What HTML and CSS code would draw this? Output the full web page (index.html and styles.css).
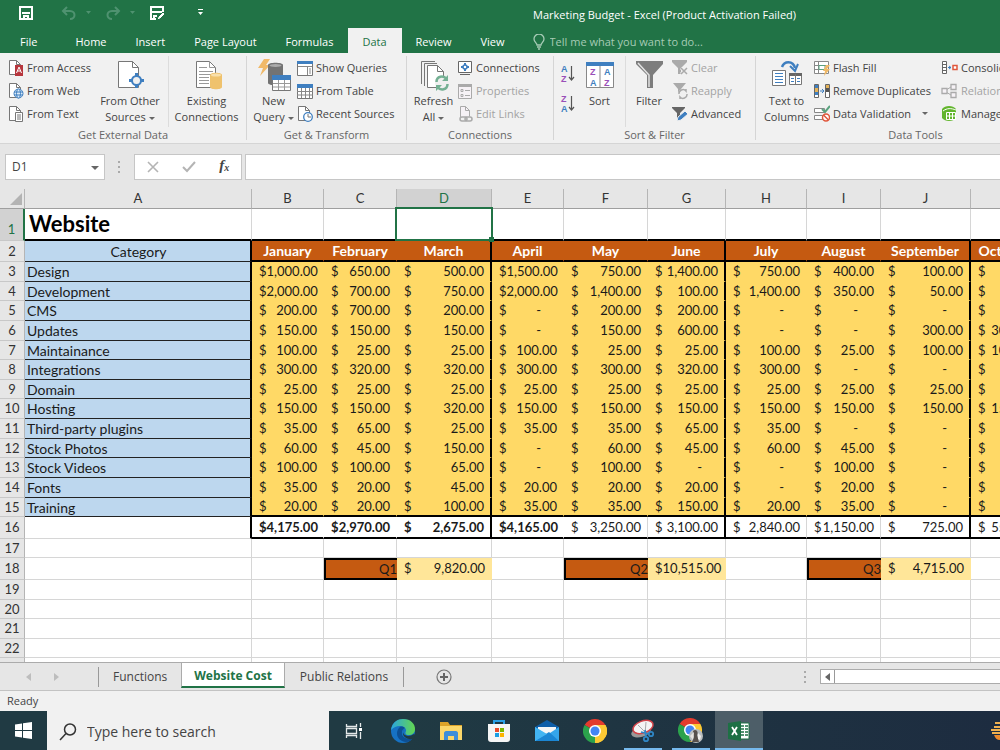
FILE: index.html
```html
<!DOCTYPE html>
<html lang="en">
<head>
    <meta charset="UTF-8">
    <meta name="viewport" content="width=device-width, initial-scale=1.0">
    <title>Marketing Budget - Excel</title>
    <link rel="stylesheet" href="styles.css">
</head>
<body>
<div class="app">
    <header class="titlebar">
        <div class="quick-access">
            <button class="qa-btn" aria-label="Save">
                <svg width="16" height="16" viewBox="0 0 16 16" fill="none" stroke="#fff" stroke-width="2"><path d="M2 2h12v12H2z"/><path d="M4 8h8" stroke-width="2"/><path d="M6 14v-3h4v3"/></svg>
            </button>
            <button class="qa-btn faded" aria-label="Undo">
                <svg width="16" height="16" viewBox="0 0 16 16" fill="none" stroke="#4f9270" stroke-width="2"><path d="M6 2L2 6l4 4M2 6h7c6 0 6 8 0 8"/></svg>
                <svg width="5" height="3" viewBox="0 0 5 3"><path d="M0 0h5L2.500 3z" fill="#4f9270"/></svg>
            </button>
            <button class="qa-btn faded" aria-label="Redo">
                <svg width="16" height="16" viewBox="0 0 16 16" fill="none" stroke="#4f9270" stroke-width="2"><path d="M10 2l4 4-4 4M14 6H7c-6 0-6 8 0 8"/></svg>
                <svg width="5" height="3" viewBox="0 0 5 3"><path d="M0 0h5L2.500 3z" fill="#4f9270"/></svg>
            </button>
            <button class="qa-btn" aria-label="Save As">
                <svg width="16" height="16" viewBox="0 0 16 16" fill="none" stroke="#fff" stroke-width="2"><path d="M14 7V2H2v12h5M3 7h10M5 14v-3h3"/><path d="M8 15l1-3 5-5 2 2-5 5z" fill="#fff" stroke="#217346" stroke-width="1"/></svg>
            </button>
            <button class="qa-btn" aria-label="Customize Quick Access Toolbar">
                <svg width="7" height="7" viewBox="0 0 7 7" fill="#fff"><path d="M1 0h5v1H1zM1 3h5L3.500 6z"/></svg>
            </button>
        </div>
        <div class="doc-title">Marketing Budget - Excel (Product Activation Failed)</div>
    </header>

    <nav class="ribbon-tabs">
        <button class="tab file">File</button>
        <button class="tab">Home</button>
        <button class="tab">Insert</button>
        <button class="tab">Page Layout</button>
        <button class="tab">Formulas</button>
        <button class="tab active">Data</button>
        <button class="tab">Review</button>
        <button class="tab">View</button>
        <label class="tell-me">
            <svg width="12" height="16" viewBox="0 0 12 16" fill="none" stroke="#a6cbb5" stroke-width="1.300"><path d="M4 11c0-2-3-3-3-6a5 5 0 0 1 10 0c0 3-3 4-3 6zM4 13h4M5 15h2"/></svg>
            <input type="text" placeholder="Tell me what you want to do..." aria-label="Tell me what you want to do">
        </label>
    </nav>

    <section class="ribbon">
        <div class="group get-external">
            <div class="group-body">
                <div class="stack">
                    <button class="small"><svg width="16" height="18" viewBox="0 0 16 18"><path d="M1.500 1.500h7l4 4v10h-11z" fill="#fff" stroke="#777"/><path d="M8.500 1.500v4h4" fill="none" stroke="#777"/><path d="M7 6h8v11H7z" fill="#b7363d"/><path d="M8.500 14L11 8l2.500 6M9.500 12h3" stroke="#fff" fill="none"/></svg>From Access</button>
                    <button class="small"><svg width="16" height="18" viewBox="0 0 16 18"><path d="M1.500 1.500h7l4 4v10h-11z" fill="#fff" stroke="#777"/><path d="M8.500 1.500v4h4" fill="none" stroke="#777"/><g fill="#dcebf8" stroke="#3f7fc0"><circle cx="10.500" cy="11.500" r="4.500"/><ellipse cx="10.500" cy="11.500" rx="2" ry="4.500"/><path d="M6 10h9M6 13h9"/></g></svg>From Web</button>
                    <button class="small"><svg width="16" height="18" viewBox="0 0 16 18"><path d="M1.500 1.500h7l4 4v10h-11z" fill="#fff" stroke="#777"/><path d="M8.500 1.500v4h4" fill="none" stroke="#777"/><path d="M7.500 7.500h7v9h-7z" fill="#fff" stroke="#777"/><path d="M9 10h4M9 12h4M9 14h4" stroke="#777"/></svg>From Text</button>
                </div>
                <button class="big w76"><svg width="32" height="32" viewBox="0 0 32 32"><path d="M4.500 2.500h14l6 6v20h-20z" fill="#fff" stroke="#777"/><path d="M18.500 2.500v6h6" fill="none" stroke="#777"/><circle cx="22.500" cy="21.500" r="4.500" fill="#f0f0f0" stroke="#3f7fc0" stroke-width="2"/><path d="M22.500 14v4M22.500 25v4M15 21.500h4M26 21.500h4" stroke="#3f7fc0" stroke-width="3"/></svg><span>From Other<br>Sources<i class="caret"></i></span></button>
                <button class="big w76 divided"><svg width="32" height="32" viewBox="0 0 32 32"><path d="M5.500 2.500h13l6 6v20h-19z" fill="#fff" stroke="#777"/><path d="M18.500 2.500v6h6M8 8.500h8M8 12.500h14M8 15.500h12M8 18.500h10M8 21.500h10M8 24.500h10" fill="none" stroke="#999"/><path d="M19 16c0-3 12-3 12 0v12c0 3-12 3-12 0z" fill="#efc26d"/><ellipse cx="25" cy="16" rx="5" ry="1.500" fill="#f8dfab"/></svg><span>Existing<br>Connections</span></button>
            </div>
            <div class="group-label">Get External Data</div>
        </div>

        <div class="group get-transform">
            <div class="group-body">
                <button class="big w46"><svg width="34" height="32" viewBox="0 0 34 32"><path d="M7 0h6L9 6h4L3 17l3-8H1z" fill="#f0b968"/><path d="M11 6c0-3 15-3 15 0v18c0 3-15 3-15 0z" fill="#737373"/><ellipse cx="18.500" cy="6.500" rx="6" ry="1.500" fill="#ababab"/><path d="M15.500 17.500h18v14h-18z" fill="#fff" stroke="#777"/><path d="M15 16h19v5H15z" fill="#3f7fc0"/><path d="M21.500 21v10M27.500 21v10M16 24.500h17M16 28h17" stroke="#999"/></svg><span>New<br>Query<i class="caret"></i></span></button>
                <div class="stack">
                    <button class="small"><svg width="16" height="16" viewBox="0 0 16 16"><path d="M.5 1.500h15v14H.5z" fill="#fff" stroke="#777"/><path d="M0 1h16v3H0z" fill="#3f7fc0"/><path d="M1 6.500h14M10.500 7v8M12 9h2M12 11h2M12 13h2" stroke="#888"/></svg>Show Queries</button>
                    <button class="small"><svg width="16" height="16" viewBox="0 0 16 16"><path d="M.5 1.500h15v14H.5z" fill="#fff" stroke="#777"/><path d="M0 1h16v4H0z" fill="#3f7fc0"/><path d="M4.500 5v10M8.500 5v10M12.500 5v10M0 8.500h16M0 12h16" stroke="#888"/></svg>From Table</button>
                    <button class="small"><svg width="16" height="18" viewBox="0 0 16 18"><path d="M1.500 1.500h7l4 4v10h-11z" fill="#fff" stroke="#777"/><path d="M8.500 1.500v4h4" fill="none" stroke="#777"/><circle cx="11" cy="12" r="4.300" fill="#fff" stroke="#3f7fc0" stroke-width="1.300"/><path d="M11 9v3h3" fill="none" stroke="#777"/></svg>Recent Sources</button>
                </div>
            </div>
            <div class="group-label">Get &amp; Transform</div>
        </div>

        <div class="group connections">
            <div class="group-body">
                <button class="big w46"><svg width="32" height="32" viewBox="0 0 32 32"><path d="M3.500 25V2.500H17M6.500 27V4.500H19" fill="none" stroke="#777"/><path d="M9.500 6.500h10l6 6v16h-16z" fill="#fff" stroke="#777"/><path d="M19.500 6.500v6h6" fill="none" stroke="#777"/><circle cx="24" cy="24" r="7" fill="#f0f0f0"/><path d="M18.500 23c0-6 7-7 10-3M29.500 25c0 6-7 7-10 3" fill="none" stroke="#74b093" stroke-width="2.500"/><path d="M30 16v6h-6zM18 32v-6h6z" fill="#74b093"/></svg><span>Refresh<br>All<i class="caret"></i></span></button>
                <div class="stack">
                    <button class="small"><svg width="16" height="16" viewBox="0 0 16 16"><path d="M1.500 1.500h13v11h-13zM3 14.500h10" fill="#fff" stroke="#666"/><path d="M8 3v8M4 7h8" stroke="#3f7fc0" stroke-width="2"/><circle cx="8" cy="7" r="2" fill="#fff" stroke="#3f7fc0" stroke-width="1.500"/></svg>Connections</button>
                    <button class="small" disabled><svg width="16" height="16" viewBox="0 0 16 16"><path d="M1.500 1.500h13v14h-13z" fill="#f6f2f6" stroke="#aaa"/><path d="M1 1h14v3H1z" fill="#aaa"/><path d="M4 6.500h2v2H4zM4 11.500h2v2H4zM8 7.500h5M8 12.500h5" stroke="#aaa" fill="none"/></svg>Properties</button>
                    <button class="small" disabled><svg width="16" height="18" viewBox="0 0 16 18"><path d="M3.500 12V1.500h5l4 4v6" fill="#f6f2f6" stroke="#aaa"/><path d="M8.500 1.500v4h4" fill="none" stroke="#aaa"/><rect x="3" y="12" width="7" height="4" rx="2" fill="none" stroke="#aaa" stroke-width="1.500"/><rect x="8" y="12" width="7" height="4" rx="2" fill="none" stroke="#aaa" stroke-width="1.500"/></svg>Edit Links</button>
                </div>
            </div>
            <div class="group-label">Connections</div>
        </div>

        <div class="group sort-filter">
            <div class="group-body">
                <div class="az-stack">
                    <button class="az" aria-label="Sort A to Z"><svg width="16" height="22" viewBox="0 0 16 22"><text x="1" y="9" class="az-text blue">A</text><text x="1" y="19" class="az-text violet">Z</text><path d="M11.500 3v14M9 14l2.500 3 2.500-3" fill="none" stroke="#555" stroke-width="1.200"/></svg></button>
                    <button class="az" aria-label="Sort Z to A"><svg width="16" height="22" viewBox="0 0 16 22"><text x="1" y="9" class="az-text violet">Z</text><text x="1" y="19" class="az-text blue">A</text><path d="M11.500 3v14M9 14l2.500 3 2.500-3" fill="none" stroke="#555" stroke-width="1.200"/></svg></button>
                </div>
                <button class="big w46"><svg width="32" height="32" viewBox="0 0 32 32"><path d="M2.500 5.500h27v23h-27z" fill="#fff" stroke="#888"/><path d="M2 3h28v4H2z" fill="#3f7fc0"/><path d="M16 7v21" stroke="#888"/><g class="az-text"><text x="6" y="16" class="violet">Z</text><text x="6" y="27" class="blue">A</text><text x="20" y="16" class="blue">A</text><text x="20" y="27" class="violet">Z</text></g></svg><span>Sort</span></button>
                <button class="big w46 divided"><svg width="32" height="32" viewBox="0 0 32 32"><path d="M3 2h27v3L20 16v13h-6V16L3 5z" fill="#7d7d7d"/><path d="M5 4l11 12v12" fill="none" stroke="#e2e2e2" stroke-width="1.500"/></svg><span>Filter</span></button>
                <div class="stack">
                    <button class="small" disabled><svg width="16" height="18" viewBox="0 0 16 18"><path d="M0 1h15v2L9 9v6H6V9L0 3z" fill="#aaa"/><path d="M9 9l6 6M15 9l-6 6" stroke="#f1f1f1" stroke-width="3"/><path d="M9 9l6 6M15 9l-6 6" stroke="#aaa" stroke-width="1.500"/></svg>Clear</button>
                    <button class="small" disabled><svg width="16" height="18" viewBox="0 0 16 18"><path d="M1 1h13L9 7v7L6 12V7z" fill="#aaa"/><circle cx="11" cy="12" r="5" fill="#f0f0f0"/><path d="M7 12a4 4 0 0 1 7-3v-2M15 12a4 4 0 0 1-7 3v2" fill="none" stroke="#aaa" stroke-width="1.500"/></svg>Reapply</button>
                    <button class="small"><svg width="16" height="18" viewBox="0 0 16 18"><path d="M0 2h13v1L8 8v6H5V8L0 3z" fill="#666"/><path d="M5 16l1-4 7-6 3 3-7 6z" fill="#3f7fc0" stroke="#f0f0f0"/></svg>Advanced</button>
                </div>
            </div>
            <div class="group-label">Sort &amp; Filter</div>
        </div>

        <div class="group data-tools">
            <div class="group-body">
                <button class="big w54"><svg width="32" height="32" viewBox="0 0 32 32"><path d="M1.500 11.500h13v15h-13z" fill="#fff" stroke="#777"/><path d="M4 14.500h8M4 17.500h8M4 20.500h8M4 23.500h8" stroke="#3f7fc0"/><path d="M18.500 14.500h12v11h-12z" fill="#fff" stroke="#777"/><path d="M18 14h13v3H18z" fill="#666"/><path d="M24.500 15v10" stroke="#777"/><path d="M20 19.500h3M20 22.500h3M26 19.500h3M26 22.500h3" stroke="#3f7fc0"/><path d="M11 8c2-6 11-7 13 1" fill="none" stroke="#3f7fc0" stroke-width="2.500"/><path d="M19 7l5 5 3-7" fill="none" stroke="#3f7fc0" stroke-width="2"/></svg><span>Text to<br>Columns</span></button>
                <div class="stack tools-left">
                    <button class="small"><svg width="16" height="16" viewBox="0 0 16 16"><path d="M.5 1.500h14v12H.5zM.5 5.500h14M.5 9.500h14M4.500 1v12" fill="#fff" stroke="#888"/><path d="M5 5.500h6v4H5z" fill="#fff" stroke="#5aa37f"/><path d="M12 5h4l-3 4h3l-6 7 1-5H9z" fill="#f0b968"/></svg>Flash Fill</button>
                    <button class="small"><svg width="16" height="16" viewBox="0 0 16 16"><path d="M.5 1.500h4v13h-4zM11.500 1.500h4v13h-4z" fill="#fff" stroke="#666"/><path d="M1 2h3v3H1zM1 9h3v3H1z" fill="#3f7fc0"/><path d="M1 5h3v4H1zM12 2h3v3h-3z" fill="#e5b359"/><path d="M12 5h3v4h-3z" fill="#555"/><path d="M6 8h4M8 6l2 2-2 2" fill="none" stroke="#3f7fc0"/></svg>Remove Duplicates</button>
                    <button class="small"><svg width="16" height="17" viewBox="0 0 16 17"><path d="M.5 3.500h10v4H.5zM.5 10.500h10v4H.5z" fill="#fff" stroke="#888"/><path d="M8 4l3 3 5-6" fill="none" stroke="#5aa37f" stroke-width="2"/><circle cx="12" cy="12.500" r="3.500" fill="#fff" stroke="#e0573c" stroke-width="1.500"/><path d="M9.500 10l5 5" stroke="#e0573c" stroke-width="1.500"/></svg>Data Validation<i class="caret wide"></i></button>
                </div>
                <div class="stack">
                    <button class="small"><svg width="17" height="16" viewBox="0 0 17 16"><path d="M1.500 1.500h4v12h-4zM1 4.500h5M1 7.500h5M1 10.500h5" fill="#fff" stroke="#666"/><path d="M7 7.500h3M8 6l2 1.500L8 9" fill="none" stroke="#3f7fc0"/><path d="M12 5.500h4v4h-4z" fill="#fff" stroke="#e0573c" stroke-width="1.500"/></svg>Consolidate</button>
                    <button class="small" disabled><svg width="17" height="16" viewBox="0 0 17 16"><path d="M5 7l5-3M5 9l5 3" stroke="#aaa"/><path d="M1 5.500h5v5H1zM10 1.500h5v5h-5zM10 9.500h5v5h-5z" fill="#f6f2f6" stroke="#aaa" stroke-width="1.300"/></svg>Relationships</button>
                    <button class="small"><svg width="17" height="17" viewBox="0 0 17 17"><path d="M1 4c3-4 11-4 14 0v9c-3 4-11 4-14 0z" fill="#62b52d"/><path d="M5.500 7.500h9v7h-9zM8.500 7v8M11.500 7v8M5 11h10" fill="none" stroke="#fff"/><path d="M2 6c4-3 8-3 13-1" stroke="#fff" fill="none"/></svg>Manage Data Model</button>
                </div>
            </div>
            <div class="group-label">Data Tools</div>
        </div>
    </section>

    <div class="formula-bar">
        <div class="name-box">
            <input type="text" value="D1" aria-label="Name Box">
            <button aria-label="Name list"><i class="caret"></i></button>
        </div>
        <span class="grip"></span>
        <div class="fx-box">
            <button aria-label="Cancel"><svg width="12" height="12" viewBox="0 0 12 12"><path d="M1 1l10 10M11 1L1 11" stroke="#b4b4b4" stroke-width="1.600"/></svg></button>
            <button aria-label="Enter"><svg width="14" height="12" viewBox="0 0 14 12"><path d="M1 6l4 4 8-9" fill="none" stroke="#b4b4b4" stroke-width="2"/></svg></button>
            <button class="fx" aria-label="Insert Function">f<sub>x</sub></button>
        </div>
        <input class="formula" type="text" aria-label="Formula">
    </div>

    <main class="sheet">
        <table id="grid">
            <colgroup>
                <col class="c-head"><col class="c-a"><col class="c-b"><col class="c-c"><col class="c-d"><col class="c-e"><col class="c-f"><col class="c-g"><col class="c-h"><col class="c-i"><col class="c-j"><col class="c-k">
            </colgroup>
            <thead>
                <tr>
                    <th class="corner"><svg width="12" height="12" viewBox="0 0 12 12"><path d="M12 0v12H0z" fill="#b3b3b3"/></svg></th>
                    <th>A</th><th>B</th><th>C</th><th class="selected">D</th><th>E</th><th>F</th><th>G</th><th>H</th><th>I</th><th>J</th><th></th>
                </tr>
            </thead>
            <tbody></tbody>
        </table>
    </main>

    <footer class="sheet-tabs">
        <div class="tab-arrows">
            <button aria-label="Previous sheet"><svg width="5" height="8" viewBox="0 0 5 8"><path d="M5 0v8L0 4z" fill="#bdbdbd"/></svg></button>
            <button aria-label="Next sheet"><svg width="5" height="8" viewBox="0 0 5 8"><path d="M0 0v8l5-4z" fill="#bdbdbd"/></svg></button>
        </div>
        <button class="sheet-tab first">Functions</button>
        <button class="sheet-tab current">Website Cost</button>
        <button class="sheet-tab last">Public Relations</button>
        <button class="add-sheet" aria-label="New sheet"><svg width="16" height="16" viewBox="0 0 16 16"><circle cx="8" cy="8" r="7" fill="none" stroke="#777" stroke-width="1.200"/><path d="M8 4v8M4 8h8" stroke="#666" stroke-width="2"/></svg></button>
        <span class="grip"></span>
        <div class="scrollbar">
            <button aria-label="Scroll left"><svg width="5" height="8" viewBox="0 0 5 8"><path d="M5 0v8L0 4z" fill="#666"/></svg></button>
        </div>
    </footer>
    <div class="status">Ready</div>

    <div class="taskbar">
        <button class="start" aria-label="Start"><svg width="17" height="17" viewBox="0 0 17 17" fill="#fff"><path d="M0 2.500l7-1V8H0zM8 1.300L17 0v8H8zM0 9h7v6.500l-7-1zM8 9h9v8l-9-1.300z"/></svg></button>
        <label class="search">
            <svg width="18" height="18" viewBox="0 0 18 18" fill="none" stroke="#333" stroke-width="1.500"><circle cx="11" cy="6.500" r="5.500"/><path d="M7 10.500L1 17"/></svg>
            <input type="text" placeholder="Type here to search" aria-label="Search">
        </label>
        <button class="task view" aria-label="Task View"><svg width="18" height="16" viewBox="0 0 18 16" fill="none" stroke="#e4e8e9" stroke-width="1.300"><path d="M1.500 1v2.500h10V1M1.500 15v-2.500h10V15M1.500 5.500h10v5h-10zM15.500 0v4M15.500 9v7"/><path d="M14 5h3v3h-3z" fill="#fff" stroke="none"/></svg></button>
        <button class="task" aria-label="Edge"><svg width="24" height="24" viewBox="0 0 24 24">
            <defs><linearGradient id="edgeTop" x1="0" x2="1"><stop offset="0" stop-color="#2aa6e0"/><stop offset="1" stop-color="#63d64f"/></linearGradient></defs>
            <circle cx="12" cy="12" r="12" fill="#1672c4"/><path d="M0 11C1 3 7 0 12 0c8 0 12 5 12 10 0 4-3 6-6 6-4 0-4-2-3-4 1-5-9-8-15-1z" fill="url(#edgeTop)"/><path d="M9 8c-5 4-4 14 6 15 3 0 6-2 7-4-5 2-12 0-11-6 0-2 1-3 3-4-1-1-3-2-5-1z" fill="#0d4f93"/><path d="M13 10c-2 3-1 6 4 7 2 0 4-1 6-2l1 1c0 2-1 3-2 4-5 1-11-2-10-7 0-1 0-2 1-3z" fill="#203a43"/></svg></button>
        <button class="task" aria-label="File Explorer"><svg width="22" height="20" viewBox="0 0 22 20"><path d="M0 1h8l2 3h12v15H0z" fill="#dca329"/><path d="M0 5h22v14H0z" fill="#fbd76a"/><path d="M4 19v-7c0-1 1-2 2-2h10c1 0 2 1 2 2v7h-4v-4H8v4z" fill="#3d8ed8"/></svg></button>
        <button class="task" aria-label="Microsoft Store"><svg width="24" height="24" viewBox="0 0 24 24"><path d="M7 6V2h10v4" fill="none" stroke="#2aa0e6" stroke-width="2"/><path d="M1 5h22v15c0 2-1 3-3 3H4c-2 0-3-1-3-3z" fill="#f5f5f5"/><path d="M8 9h4v4H8z" fill="#ea4b2b"/><path d="M13 9h4v4h-4z" fill="#7ab800"/><path d="M8 14h4v4H8z" fill="#1b9de2"/><path d="M13 14h4v4h-4z" fill="#fbb400"/></svg></button>
        <button class="task" aria-label="Mail"><svg width="24" height="24" viewBox="0 0 24 24"><path d="M0 8l12-7 12 7v6H0z" fill="#0f5ea8"/><path d="M3 8h18v8H3z" fill="#f5f5f5"/><path d="M0 8l12 8 12-8v14H0z" fill="#35a5ea"/><path d="M0 22l14-9 10 9z" fill="#1b86d4"/><path d="M0 8l12 7L0 22z" fill="#42b4f2"/></svg></button>
        <button class="task" aria-label="Chrome"><svg width="24" height="24" viewBox="0 0 24 24"><path d="M12 12L1.600 6A12 12 0 0 1 22.400 6z" fill="#e33b2e"/><path d="M12 12l10.400-6A12 12 0 0 1 12 24z" fill="#fcc934"/><path d="M12 12v12A12 12 0 0 1 1.600 6z" fill="#2ba24c"/><path d="M12 6h10.400A12 12 0 0 1 12 24l5.200-9z" fill="#fcc934"/><circle cx="12" cy="12" r="6" fill="#fff"/><circle cx="12" cy="12" r="4.500" fill="#4285f4"/></svg></button>
        <button class="task open" aria-label="Snipping Tool"><svg width="24" height="24" viewBox="0 0 24 24"><ellipse cx="10" cy="13" rx="10" ry="5" fill="#999" transform="rotate(-15 10 13)"/><ellipse cx="12" cy="8" rx="10.500" ry="6" fill="#f4f4f4" stroke="#d2444a" stroke-width="1.500" transform="rotate(-20 12 8)"/><path d="M7 6l9 9M15 3l-1 12" stroke="#aaa"/><g fill="none" stroke="#2f86c5" stroke-width="1.800"><circle cx="20" cy="15" r="2.200"/><circle cx="15" cy="20" r="2.200"/><path d="M10 13l8 2M14 11l1 7"/></g></svg></button>
        <button class="task open" aria-label="Chrome profile"><svg width="26" height="26" viewBox="0 0 26 26"><path d="M12 12L1.600 6A12 12 0 0 1 22.400 6z" fill="#e33b2e"/><path d="M12 12v12A12 12 0 0 1 1.600 6z" fill="#2ba24c"/><path d="M12 6h10.400A12 12 0 0 1 12 24l5.200-9z" fill="#fcc934"/><circle cx="12" cy="12" r="6" fill="#fff"/><circle cx="12" cy="12" r="4.500" fill="#4285f4"/><circle cx="18" cy="18" r="7" fill="#b9bec0"/><path d="M15 13c3-3 6 1 4 4l2 7h-7l2-5z" fill="#58514c"/><path d="M20 15l3 3-1 4-2-1z" fill="#f1efec"/><path d="M12 18l4-4-1 8z" fill="#e8e4df"/></svg></button>
        <button class="task open active" aria-label="Excel"><svg width="22" height="20" viewBox="0 0 22 20"><path d="M11 2h10v16H11z" fill="#fff" stroke="#1d7044"/><path d="M13 5h3M17 5h3M13 8h3M17 8h3M13 11h3M17 11h3M13 14h3M17 14h3" stroke="#1d7044" stroke-width="1.300"/><path d="M0 2l13-2v20L0 18z" fill="#1d7044"/><path d="M4 6l5 8M9 6l-5 8" stroke="#fff" stroke-width="1.800"/></svg></button>
        <span class="tray"><svg width="9" height="20" viewBox="0 0 9 20"><path d="M4 2h5M3 6h6M0 9h9M1 12h8" stroke="#f0b04f" stroke-width="2"/><path d="M3 14h6v5c-3 0-5-2-6-5z" fill="#ee8a2c"/></svg></span>
    </div>
</div>

<script>
    const months = ['January', 'February', 'March', 'April', 'May', 'June', 'July', 'August', 'September', 'October'];
    const costs = [
        ['Design', '1,000.00', '650.00', '500.00', '1,500.00', '750.00', '1,400.00', '750.00', '400.00', '100.00', '-'],
        ['Development', '2,000.00', '700.00', '750.00', '2,000.00', '1,400.00', '100.00', '1,400.00', '350.00', '50.00', '-'],
        ['CMS', '200.00', '700.00', '200.00', '-', '200.00', '200.00', '-', '-', '-', '-'],
        ['Updates', '150.00', '150.00', '150.00', '-', '150.00', '600.00', '-', '-', '300.00', '300.00'],
        ['Maintainance', '100.00', '25.00', '25.00', '100.00', '25.00', '25.00', '100.00', '25.00', '100.00', '100.00'],
        ['Integrations', '300.00', '320.00', '320.00', '300.00', '300.00', '320.00', '300.00', '-', '-', '-'],
        ['Domain', '25.00', '25.00', '25.00', '25.00', '25.00', '25.00', '25.00', '25.00', '25.00', '-'],
        ['Hosting', '150.00', '150.00', '320.00', '150.00', '150.00', '150.00', '150.00', '150.00', '150.00', '150.00'],
        ['Third-party plugins', '35.00', '65.00', '25.00', '35.00', '35.00', '65.00', '35.00', '-', '-', '-'],
        ['Stock Photos', '60.00', '45.00', '150.00', '-', '60.00', '45.00', '60.00', '45.00', '-', '-'],
        ['Stock Videos', '100.00', '100.00', '65.00', '-', '100.00', '-', '-', '100.00', '-', '-'],
        ['Fonts', '35.00', '20.00', '45.00', '20.00', '20.00', '20.00', '-', '20.00', '-', '-'],
        ['Training', '20.00', '20.00', '100.00', '35.00', '35.00', '150.00', '20.00', '35.00', '-', '-']
    ];
    const totals = ['4,175.00', '2,970.00', '2,675.00', '4,165.00', '3,250.00', '3,100.00', '2,840.00', '1,150.00', '725.00', '550.00'];
    const quarters = { 1: 'Q1', 2: '9,820.00', 4: 'Q2', 5: '10,515.00', 7: 'Q3', 8: '4,715.00' };

    const body = document.querySelector('#grid tbody');

    function money(value) {
        const cls = value === '-' ? 'amount nil' : 'amount';
        return '<div class="money"><span>$</span><span class="' + cls + '">' + value + '</span></div>';
    }

    // last month of a quarter gets the heavy right edge
    function edge(i) {
        return i % 3 === 2 ? ' edge' : '';
    }

    function addRow(number, cls, cells) {
        body.insertAdjacentHTML('beforeend', '<tr class="' + cls + '"><th>' + number + '</th>' + cells + '</tr>');
    }

    function cellsFor(fn) {
        return months.map((m, i) => fn(i)).join('');
    }

    addRow(1, 'row-title', '<td>Website</td>' + cellsFor(i => i === 2 ? '<td class="active-cell"></td>' : '<td></td>'));
    addRow(2, 'row-months', '<td class="category">Category</td>' + cellsFor(i => '<td class="month' + edge(i) + '">' + months[i] + '</td>'));
    costs.forEach((row, n) => {
        addRow(n + 3, 'row-cost', '<td class="category">' + row[0] + '</td>' + cellsFor(i => '<td class="cost' + edge(i) + '">' + money(row[i + 1]) + '</td>'));
    });
    addRow(16, 'row-total', '<td></td>' + cellsFor(i => '<td class="total' + (i < 4 ? ' bold' : '') + edge(i) + '">' + money(totals[i]) + '</td>'));
    addRow(17, 'row-blank', '<td></td>' + cellsFor(i => '<td></td>'));
    addRow(18, 'row-quarter', '<td></td>' + cellsFor(i => {
        if (!quarters[i]) return '<td></td>';
        if (i % 3 === 1) return '<td class="q-name">' + quarters[i] + '</td>';
        return '<td class="q-sum">' + money(quarters[i]) + '</td>';
    }));
    for (let n = 19; n <= 22; n++) {
        addRow(n, 'row-blank', '<td></td>' + cellsFor(i => '<td></td>'));
    }
    addRow('', 'row-blank', '<td></td>' + cellsFor(i => '<td></td>'));
</script>
</body>
</html>
```
FILE: styles.css
```css
* {
    box-sizing: border-box;
}
body {
    margin: 0;
    font-family: "Open Sans", "Noto Sans", sans-serif;
    font-size: 11px;
    color: #444;
    background-color: #e6e6e6;
}
button,
input {
    font: inherit;
    color: inherit;
    background: none;
    border: none;
    padding: 0;
    margin: 0;
    outline: none;
}
button {
    cursor: pointer;
    white-space: nowrap;
}
svg {
    display: block;
    flex: none;
}
.app {
    display: flex;
    flex-direction: column;
    height: 100vh;
    overflow: hidden;
}

/* title bar */
.titlebar {
    display: flex;
    align-items: center;
    height: 28px;
    flex: none;
    background-color: #217346;
    color: #fff;
}
.quick-access {
    display: flex;
    align-items: center;
    gap: 14px;
    width: 533px;
    padding-left: 18px;
    padding-bottom: 3px;
}
.qa-btn {
    display: flex;
    align-items: center;
    gap: 9px;
}
.qa-btn:first-child {
    margin-right: 13px;
}
.qa-btn:last-child {
    margin-left: 18px;
}
.doc-title {
    white-space: nowrap;
}

/* ribbon tabs */
.ribbon-tabs {
    display: flex;
    height: 25px;
    flex: none;
    background-color: #217346;
    color: #fff;
}
.tab {
    padding: 2px 15px 0 14px;
}
.tab.file {
    padding: 2px 24px 0 20px;
}
.tab.active {
    background-color: #f1f1f1;
    color: #217346;
}
.tell-me {
    display: flex;
    align-items: center;
    gap: 5px;
    margin-left: 13px;
    padding-top: 2px;
    flex: 1;
}
.tell-me input {
    flex: 1;
}
.tell-me input::placeholder {
    color: #a6cbb5;
    opacity: 1;
}

/* ribbon */
.ribbon {
    display: flex;
    height: 91px;
    flex: none;
    padding-top: 3px;
    background-color: #f1f1f1;
    border-bottom: 1px solid #d5d5d5;
    overflow: hidden;
}
.group {
    flex: none;
    border-right: 1px solid #d5d5d5;
    margin-bottom: 3px;
}
.get-external {
    width: 247px;
}
.get-transform {
    width: 160px;
}
.connections {
    width: 147px;
}
.sort-filter {
    width: 202px;
}
.data-tools {
    width: 320px;
}
.group-body {
    display: flex;
    height: 71px;
    padding-left: 3px;
}
.get-external .group-body {
    padding-left: 8px;
}
.group-label {
    height: 16px;
    line-height: 16px;
    text-align: center;
    color: #666;
}
.stack {
    display: flex;
    flex-direction: column;
    flex: none;
}
.get-external .stack {
    width: 84px;
}
.tools-left {
    width: 127px;
}
.small {
    display: flex;
    align-items: center;
    gap: 3px;
    height: 23px;
}
.small[disabled] {
    color: #a3a3a3;
}
.big {
    display: flex;
    flex-direction: column;
    align-items: center;
    flex: none;
    line-height: 16px;
    padding-top: 3px;
    gap: 2px;
}
.big.w76 {
    width: 76px;
}
.big.w54 {
    width: 55px;
}
.big.w46 {
    width: 47px;
}
.divided {
    border-left: 1px solid #dcdcdc;
}
.caret {
    display: inline-block;
    border: 3px solid transparent;
    border-top-color: #666;
    border-bottom-width: 0;
    margin-left: 3px;
    vertical-align: middle;
}
.caret.wide {
    margin-left: 8px;
}
.az-stack {
    display: flex;
    flex-direction: column;
    gap: 8px;
    width: 19px;
    padding: 7px 0 0 3px;
}
.sort-filter .divided {
    margin-left: 2px;
}
.az-text {
    font-family: "Liberation Sans", sans-serif;
    font-size: 9px;
    font-weight: 700;
}
.blue {
    fill: #3f7fc0;
}
.violet {
    fill: #9a4fb8;
}

/* formula bar */
.formula-bar {
    display: flex;
    align-items: center;
    height: 45px;
    flex: none;
    padding-left: 5px;
    background-color: #e6e6e6;
    font-size: 12px;
}
.name-box,
.fx-box,
.formula {
    display: flex;
    align-items: center;
    height: 26px;
    background-color: #fff;
    border: 1px solid #c6c6c6;
}
.name-box {
    width: 100px;
    padding: 0 5px 0 6px;
}
.name-box input {
    flex: 1;
    min-width: 0;
}
.name-box .caret {
    border-width: 4px 4px 0;
}
.grip {
    width: 2px;
    height: 12px;
    flex: none;
    background-image: linear-gradient(#aaa 2px, transparent 2px);
    background-size: 2px 5px;
}
.formula-bar .grip {
    margin: 0 14px 0 13px;
}
.fx-box {
    width: 108px;
    justify-content: space-around;
}
.fx {
    font-family: "Liberation Serif", serif;
    font-style: italic;
    font-weight: 700;
    font-size: 15px;
    line-height: 15px;
}
.fx sub {
    font-size: 10px;
    vertical-align: -1px;
}
.formula {
    flex: 1;
    margin-left: 3px;
    border-right: none;
}

/* worksheet */
.sheet {
    flex: 1;
    min-height: 0;
    overflow: hidden;
    background-color: #fff;
    font-family: Lato, "Open Sans", sans-serif;
    font-size: 13px;
    color: #1a1a1a;
}
table {
    table-layout: fixed;
    width: 1039px;
    border-collapse: separate;
    border-spacing: 0;
}
.c-head { width: 25px; }
.c-a { width: 227px; }
.c-b { width: 72px; }
.c-c { width: 73px; }
.c-d { width: 95px; }
.c-e { width: 72px; }
.c-f { width: 84px; }
.c-g { width: 78px; }
.c-h { width: 81px; }
.c-i { width: 74px; }
.c-j { width: 90px; }
.c-k { width: 68px; }
th,
td {
    padding: 0;
    line-height: 17px;
    white-space: nowrap;
    border-right: 1px solid #d6d6d6;
    border-bottom: 1px solid #d6d6d6;
}
th {
    font-weight: 400;
    color: #333;
    background-color: #e6e6e6;
    border-color: #b5b5b5;
}
thead tr {
    height: 20px;
}
thead th {
    border-bottom-color: #9f9f9f;
}
thead .selected {
    background-color: #d2d2d2;
    color: #217346;
}
.corner svg {
    margin-left: 10px;
}
tbody tr {
    height: 20px;
}
tbody th {
    border-bottom-color: #c8c8c8;
}
.row-title {
    height: 32px;
}
.row-title th {
    background-color: #d2d2d2;
    color: #217346;
    border-right: 2px solid #217346;
    vertical-align: bottom;
    padding-bottom: 2px;
}
.row-title td {
    border-bottom: 2px solid #000;
}
.row-title td:nth-child(2) {
    padding-left: 4px;
    font-size: 22px;
    font-weight: 700;
    line-height: 28px;
    color: #000;
}
.active-cell {
    position: relative;
}
.active-cell::before {
    content: "";
    position: absolute;
    inset: -2px;
    border: 2px solid #217346;
}
.active-cell::after {
    content: "";
    position: absolute;
    right: -3px;
    bottom: -3px;
    width: 5px;
    height: 5px;
    background-color: #217346;
}
.row-months {
    height: 21px;
}
.category {
    padding-left: 2px;
    font-size: 14px;
    background-color: #bdd7ee;
    border-right: 2px solid #000;
    border-bottom: 1px solid #222;
}
.row-months .category {
    text-align: center;
}
.month {
    background-color: #c55a11;
    border-right-color: #c55a11;
    border-bottom: 2px solid #000;
    color: #fff;
    font-size: 14px;
    font-weight: 700;
    text-align: center;
}
.cost {
    background-color: #ffd966;
    border-color: #ffd966;
}
.row-cost:nth-child(4),
.row-cost:nth-child(7),
.row-cost:nth-child(9),
.row-cost:nth-child(12),
.row-cost:nth-child(15),
.row-blank:nth-child(17),
.row-blank:nth-child(20),
.row-blank:nth-child(22) {
    height: 19px;
}
.row-cost:nth-child(15) .cost {
    border-bottom: 2px solid #000;
}
.row-total {
    height: 22px;
}
.row-total td:nth-child(2) {
    border-right: 2px solid #000;
}
.total {
    border-bottom: 2px solid #000;
}
.bold {
    font-weight: 700;
    border-right-color: #fff;
}
.edge {
    border-right: 2px solid #000;
}
.money {
    display: flex;
    justify-content: space-between;
    padding: 0 6px 0 7px;
}
.nil {
    padding-right: 16px;
}
.row-quarter {
    height: 22px;
}
.q-name {
    background-color: #c55a11;
    border: 2px solid #000;
    border-right: none;
    text-align: right;
}
.q-sum {
    background-color: #ffe699;
    border-color: #ffe699;
}

/* sheet tabs */
.sheet-tabs {
    display: flex;
    align-items: center;
    height: 29px;
    flex: none;
    background-color: #e6e6e6;
    border-top: 1px solid #ababab;
    border-bottom: 1px solid #c3c3c3;
    font-size: 12px;
}
.tab-arrows {
    display: flex;
    gap: 23px;
    width: 98px;
    padding-left: 26px;
}
.sheet-tab {
    height: 20px;
    padding: 0 14px;
}
.sheet-tab.first {
    border-left: 1px solid #999;
}
.sheet-tab.last {
    padding: 0 15px;
    border-right: 1px solid #999;
}
.sheet-tab.current {
    align-self: flex-start;
    height: 25px;
    padding: 2px 12px 0;
    background-color: #fff;
    border: 1px solid #ababab;
    border-top: none;
    border-bottom: 2px solid #217346;
    color: #217346;
    font-weight: 700;
}
.add-sheet {
    margin-left: 32px;
}
.sheet-tabs .grip {
    margin-left: auto;
}
.scrollbar {
    display: flex;
    width: 180px;
    height: 15px;
    margin-left: 14px;
    background-color: #fff;
    border: 1px solid #ababab;
    border-right: none;
}
.scrollbar button {
    display: flex;
    align-items: center;
    justify-content: center;
    width: 14px;
    border-right: 1px solid #999;
}
.status {
    height: 20px;
    line-height: 20px;
    flex: none;
    padding-left: 7px;
    background-color: #f1f1f1;
}

/* taskbar */
.taskbar {
    display: flex;
    height: 39px;
    flex: none;
    background: linear-gradient(90deg, #203a43 40%, #1d2c40);
}
.start {
    display: flex;
    align-items: center;
    justify-content: center;
    width: 47px;
}
.search {
    display: flex;
    align-items: center;
    gap: 10px;
    width: 282px;
    padding-left: 12px;
    padding-top: 2px;
    background-color: #f1f1f1;
    font-size: 14px;
}
.search input {
    flex: 1;
    min-width: 0;
}
.search input::placeholder {
    color: #444;
    opacity: 1;
}
.task {
    display: flex;
    align-items: center;
    justify-content: center;
    width: 48px;
    padding-top: 1px;
}
.task.view {
    width: 50px;
}
.task.open {
    background: linear-gradient(#76b9ed, #76b9ed) center bottom / 38px 2px no-repeat;
}
.task.active {
    background-color: #4d5e68;
    background-size: 100% 2px;
}
.tray {
    display: flex;
    align-items: center;
    margin-left: auto;
}
```
